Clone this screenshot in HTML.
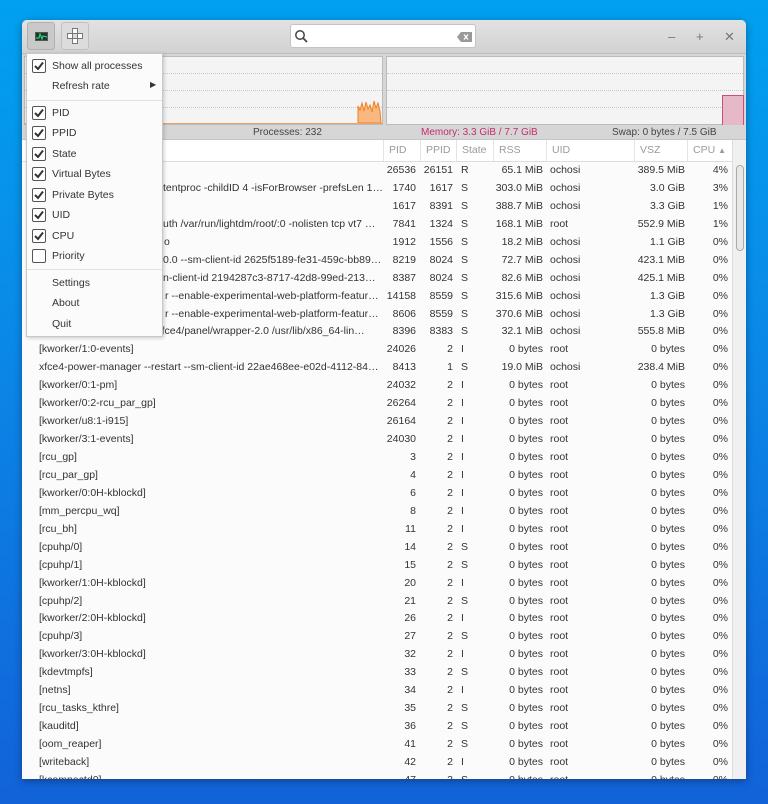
<!DOCTYPE html>
<html><head><meta charset="utf-8"><style>
*{margin:0;padding:0;box-sizing:border-box}
body{width:768px;height:804px;overflow:hidden;background:linear-gradient(180deg,#01a0f0 0%,#0a8ae8 40%,#1262d8 100%);font-family:"Liberation Sans",sans-serif;font-size:10.5px;color:#333;position:relative}
#win{position:absolute;left:22px;top:20px;width:724px;height:759px;background:#fbfbfb;border-radius:5px 5px 0 0;overflow:hidden;box-shadow:0 2px 8px rgba(0,0,0,.35)}
#tb{position:absolute;left:0;top:0;width:724px;height:34px;background:linear-gradient(#e2e2e2,#d2d2d2);border-bottom:1px solid #bdbdbd}
.btn{position:absolute;top:2px;width:28px;height:28px;border:1px solid #c0c0c0;border-radius:3px;background:#dcdcdc}
#search{position:absolute;left:268px;top:4px;width:186px;height:24px;background:#fff;border:1px solid #c4c4c4;border-radius:3px}
.wc{position:absolute;top:9px;color:#777;font-size:13px}
#graphs{position:absolute;left:0;top:34px;width:724px;height:73px;background:#d6d6d6}
.g{position:absolute;top:2px;height:69px;background:#f4f4f4;border:1px solid #bbb}
.dl{position:absolute;left:0;right:0;border-top:1px dotted #c8c8c8}
#status{position:absolute;left:0;top:107px;width:724px;height:13px;background:#d6d6d6;border-bottom:1px solid #c4c4c4;font-size:10px;color:#444}
#status span{position:absolute;top:0}
#hdr{position:absolute;left:0;top:120px;width:710px;height:22px;background:#fff;border-bottom:1px solid #ddd;color:#9a9a9a}
#hdr div{position:absolute;top:0;height:21px;line-height:21px;border-left:1px solid #e4e4e4;padding-left:5px}
#rows{position:absolute;left:0;top:142px;width:710px}
.r{position:relative;height:17.95px;line-height:17.95px;white-space:nowrap}
.r span{position:absolute;top:0}
.n{left:17px;width:344px;overflow:hidden;text-overflow:ellipsis}
.p{right:316px}.pp{right:279px}.s{left:439px}.rs{right:189px}.u{left:528px}.v{right:47px}.c{right:4px}
#sb{position:absolute;left:710px;top:120px;width:14px;height:639px;background:#f0f0f0;border-left:1px solid #ddd}
#thumb{position:absolute;left:3px;top:25px;width:8px;height:86px;border:1px solid #aaa;border-radius:4px;background:#e8e8e8}
#menu{position:absolute;left:26px;top:53px;width:137px;height:284px;background:#fbfbfb;border:1px solid #c8c8c8;box-shadow:1px 1px 4px rgba(0,0,0,.2);font-size:10.5px;color:#333}
#menu .i{position:absolute;left:25px}
.cb{position:absolute;left:5px;width:14px;height:14px;border:1.5px solid #555;border-radius:2px;background:#fff}
.cb svg{position:absolute;left:1px;top:1px}
.sep{position:absolute;left:0;right:0;border-top:1px solid #e2e2e2}
</style></head><body>
<div id="win">
 <div id="tb">
  <div class="btn" style="left:5px;background:#c9c9c9;border-color:#b0b0b0"><div style="position:absolute;left:7px;top:9px;width:13px;height:9px;background:#1c3a2c;border:1px solid #555"><svg width="11" height="7" style="position:absolute;left:0;top:0"><polyline points="0,5 3,5 4,1 6,6 7,3 11,4" fill="none" stroke="#3ee08a" stroke-width="1"/></svg></div></div>
  <div class="btn" style="left:39px"><svg width="26" height="26"><g fill="#fff" stroke="#777" stroke-width="1"><rect x="10.5" y="5.5" width="5" height="5"/><rect x="10.5" y="15.5" width="5" height="5"/><rect x="5.5" y="10.5" width="5" height="5"/><rect x="15.5" y="10.5" width="5" height="5"/></g></svg></div>
  <div id="search"><svg width="16" height="16" style="position:absolute;left:3px;top:4px"><circle cx="6" cy="6" r="4.2" fill="none" stroke="#444" stroke-width="1.5"/><line x1="9" y1="9" x2="13" y2="13" stroke="#444" stroke-width="1.8"/></svg><svg width="16" height="12" style="position:absolute;left:166px;top:6px"><path d="M4 1H15V11H4L0 6Z" fill="#999"/><path d="M7 3.5L11 8.5M11 3.5L7 8.5" stroke="#fff" stroke-width="1.3"/></svg></div>
  <span class="wc" style="left:646px">–</span><span class="wc" style="left:674px">+</span><span class="wc" style="left:702px">✕</span>
 </div>
 <div id="graphs">
  <div class="g" style="left:2px;width:359px"><div class="dl" style="top:16px"></div><div class="dl" style="top:33px"></div><div class="dl" style="top:50px"></div>
   <svg width="359" height="69" style="position:absolute;left:-1px;top:-1px"><path d="M334 67L334 50L336 54L338 47L340 55L342 46L344 53L346 49L348 56L350 45L352 52L354 47L356 55L357 67Z" fill="#f8b880" stroke="#f08020" stroke-width="1"/><line x1="0" y1="67.5" x2="359" y2="67.5" stroke="#f0a060"/></svg></div>
  <div class="g" style="left:364px;width:358px"><div class="dl" style="top:16px"></div><div class="dl" style="top:33px"></div><div class="dl" style="top:50px"></div>
   <div style="position:absolute;left:335px;top:38px;width:22px;height:30px;background:#e6b8c8;border:1px solid #c85080;border-bottom:none"></div></div>
 </div>
 <div id="status"><span style="left:231px">Processes: 232</span><span style="left:399px;color:#c42e6c">Memory: 3.3 GiB / 7.7 GiB</span><span style="left:590px">Swap: 0 bytes / 7.5 GiB</span></div>
 <div id="hdr"><div style="left:0;border:none"></div><div style="left:361px">PID</div><div style="left:398px">PPID</div><div style="left:434px">State</div><div style="left:471px">RSS</div><div style="left:524px">UID</div><div style="left:612px">VSZ</div><div style="left:665px">CPU <span style="font-size:8px">▲</span></div></div>
 <div id="rows">
<div class="r"><span class="n">xfce4-taskmanager</span><span class="p">26536</span><span class="pp">26151</span><span class="s">R</span><span class="rs">65.1 MiB</span><span class="u">ochosi</span><span class="v">389.5 MiB</span><span class="c">4%</span></div>
<div class="r"><span class="n" style="left:141px;width:220px">tentproc -childID 4 -isForBrowser -prefsLen 1…</span><span class="p">1740</span><span class="pp">1617</span><span class="s">S</span><span class="rs">303.0 MiB</span><span class="u">ochosi</span><span class="v">3.0 GiB</span><span class="c">3%</span></div>
<div class="r"><span class="n">firefox</span><span class="p">1617</span><span class="pp">8391</span><span class="s">S</span><span class="rs">388.7 MiB</span><span class="u">ochosi</span><span class="v">3.3 GiB</span><span class="c">1%</span></div>
<div class="r"><span class="n" style="left:141px;width:220px">uth /var/run/lightdm/root/:0 -nolisten tcp vt7 …</span><span class="p">7841</span><span class="pp">1324</span><span class="s">S</span><span class="rs">168.1 MiB</span><span class="u">root</span><span class="v">552.9 MiB</span><span class="c">1%</span></div>
<div class="r"><span class="n" style="left:142px;width:220px">o</span><span class="p">1912</span><span class="pp">1556</span><span class="s">S</span><span class="rs">18.2 MiB</span><span class="u">ochosi</span><span class="v">1.1 GiB</span><span class="c">0%</span></div>
<div class="r"><span class="n" style="left:141px;width:220px">0.0 --sm-client-id 2625f5189-fe31-459c-bb89…</span><span class="p">8219</span><span class="pp">8024</span><span class="s">S</span><span class="rs">72.7 MiB</span><span class="u">ochosi</span><span class="v">423.1 MiB</span><span class="c">0%</span></div>
<div class="r"><span class="n" style="left:141px;width:220px">n-client-id 2194287c3-8717-42d8-99ed-213…</span><span class="p">8387</span><span class="pp">8024</span><span class="s">S</span><span class="rs">82.6 MiB</span><span class="u">ochosi</span><span class="v">425.1 MiB</span><span class="c">0%</span></div>
<div class="r"><span class="n" style="left:143px;width:220px">r --enable-experimental-web-platform-featur…</span><span class="p">14158</span><span class="pp">8559</span><span class="s">S</span><span class="rs">315.6 MiB</span><span class="u">ochosi</span><span class="v">1.3 GiB</span><span class="c">0%</span></div>
<div class="r"><span class="n" style="left:143px;width:220px">r --enable-experimental-web-platform-featur…</span><span class="p">8606</span><span class="pp">8559</span><span class="s">S</span><span class="rs">370.6 MiB</span><span class="u">ochosi</span><span class="v">1.3 GiB</span><span class="c">0%</span></div>
<div class="r"><span class="n">/usr/lib/x86_64-linux-gnu/xfce4/panel/wrapper-2.0 /usr/lib/x86_64-lin…</span><span class="p">8396</span><span class="pp">8383</span><span class="s">S</span><span class="rs">32.1 MiB</span><span class="u">ochosi</span><span class="v">555.8 MiB</span><span class="c">0%</span></div>
<div class="r"><span class="n">[kworker/1:0-events]</span><span class="p">24026</span><span class="pp">2</span><span class="s">I</span><span class="rs">0 bytes</span><span class="u">root</span><span class="v">0 bytes</span><span class="c">0%</span></div>
<div class="r"><span class="n">xfce4-power-manager --restart --sm-client-id 22ae468ee-e02d-4112-84…</span><span class="p">8413</span><span class="pp">1</span><span class="s">S</span><span class="rs">19.0 MiB</span><span class="u">ochosi</span><span class="v">238.4 MiB</span><span class="c">0%</span></div>
<div class="r"><span class="n">[kworker/0:1-pm]</span><span class="p">24032</span><span class="pp">2</span><span class="s">I</span><span class="rs">0 bytes</span><span class="u">root</span><span class="v">0 bytes</span><span class="c">0%</span></div>
<div class="r"><span class="n">[kworker/0:2-rcu_par_gp]</span><span class="p">26264</span><span class="pp">2</span><span class="s">I</span><span class="rs">0 bytes</span><span class="u">root</span><span class="v">0 bytes</span><span class="c">0%</span></div>
<div class="r"><span class="n">[kworker/u8:1-i915]</span><span class="p">26164</span><span class="pp">2</span><span class="s">I</span><span class="rs">0 bytes</span><span class="u">root</span><span class="v">0 bytes</span><span class="c">0%</span></div>
<div class="r"><span class="n">[kworker/3:1-events]</span><span class="p">24030</span><span class="pp">2</span><span class="s">I</span><span class="rs">0 bytes</span><span class="u">root</span><span class="v">0 bytes</span><span class="c">0%</span></div>
<div class="r"><span class="n">[rcu_gp]</span><span class="p">3</span><span class="pp">2</span><span class="s">I</span><span class="rs">0 bytes</span><span class="u">root</span><span class="v">0 bytes</span><span class="c">0%</span></div>
<div class="r"><span class="n">[rcu_par_gp]</span><span class="p">4</span><span class="pp">2</span><span class="s">I</span><span class="rs">0 bytes</span><span class="u">root</span><span class="v">0 bytes</span><span class="c">0%</span></div>
<div class="r"><span class="n">[kworker/0:0H-kblockd]</span><span class="p">6</span><span class="pp">2</span><span class="s">I</span><span class="rs">0 bytes</span><span class="u">root</span><span class="v">0 bytes</span><span class="c">0%</span></div>
<div class="r"><span class="n">[mm_percpu_wq]</span><span class="p">8</span><span class="pp">2</span><span class="s">I</span><span class="rs">0 bytes</span><span class="u">root</span><span class="v">0 bytes</span><span class="c">0%</span></div>
<div class="r"><span class="n">[rcu_bh]</span><span class="p">11</span><span class="pp">2</span><span class="s">I</span><span class="rs">0 bytes</span><span class="u">root</span><span class="v">0 bytes</span><span class="c">0%</span></div>
<div class="r"><span class="n">[cpuhp/0]</span><span class="p">14</span><span class="pp">2</span><span class="s">S</span><span class="rs">0 bytes</span><span class="u">root</span><span class="v">0 bytes</span><span class="c">0%</span></div>
<div class="r"><span class="n">[cpuhp/1]</span><span class="p">15</span><span class="pp">2</span><span class="s">S</span><span class="rs">0 bytes</span><span class="u">root</span><span class="v">0 bytes</span><span class="c">0%</span></div>
<div class="r"><span class="n">[kworker/1:0H-kblockd]</span><span class="p">20</span><span class="pp">2</span><span class="s">I</span><span class="rs">0 bytes</span><span class="u">root</span><span class="v">0 bytes</span><span class="c">0%</span></div>
<div class="r"><span class="n">[cpuhp/2]</span><span class="p">21</span><span class="pp">2</span><span class="s">S</span><span class="rs">0 bytes</span><span class="u">root</span><span class="v">0 bytes</span><span class="c">0%</span></div>
<div class="r"><span class="n">[kworker/2:0H-kblockd]</span><span class="p">26</span><span class="pp">2</span><span class="s">I</span><span class="rs">0 bytes</span><span class="u">root</span><span class="v">0 bytes</span><span class="c">0%</span></div>
<div class="r"><span class="n">[cpuhp/3]</span><span class="p">27</span><span class="pp">2</span><span class="s">S</span><span class="rs">0 bytes</span><span class="u">root</span><span class="v">0 bytes</span><span class="c">0%</span></div>
<div class="r"><span class="n">[kworker/3:0H-kblockd]</span><span class="p">32</span><span class="pp">2</span><span class="s">I</span><span class="rs">0 bytes</span><span class="u">root</span><span class="v">0 bytes</span><span class="c">0%</span></div>
<div class="r"><span class="n">[kdevtmpfs]</span><span class="p">33</span><span class="pp">2</span><span class="s">S</span><span class="rs">0 bytes</span><span class="u">root</span><span class="v">0 bytes</span><span class="c">0%</span></div>
<div class="r"><span class="n">[netns]</span><span class="p">34</span><span class="pp">2</span><span class="s">I</span><span class="rs">0 bytes</span><span class="u">root</span><span class="v">0 bytes</span><span class="c">0%</span></div>
<div class="r"><span class="n">[rcu_tasks_kthre]</span><span class="p">35</span><span class="pp">2</span><span class="s">S</span><span class="rs">0 bytes</span><span class="u">root</span><span class="v">0 bytes</span><span class="c">0%</span></div>
<div class="r"><span class="n">[kauditd]</span><span class="p">36</span><span class="pp">2</span><span class="s">S</span><span class="rs">0 bytes</span><span class="u">root</span><span class="v">0 bytes</span><span class="c">0%</span></div>
<div class="r"><span class="n">[oom_reaper]</span><span class="p">41</span><span class="pp">2</span><span class="s">S</span><span class="rs">0 bytes</span><span class="u">root</span><span class="v">0 bytes</span><span class="c">0%</span></div>
<div class="r"><span class="n">[writeback]</span><span class="p">42</span><span class="pp">2</span><span class="s">I</span><span class="rs">0 bytes</span><span class="u">root</span><span class="v">0 bytes</span><span class="c">0%</span></div>
<div class="r"><span class="n">[kcompactd0]</span><span class="p">47</span><span class="pp">2</span><span class="s">S</span><span class="rs">0 bytes</span><span class="u">root</span><span class="v">0 bytes</span><span class="c">0%</span></div>
 </div>
 <div id="sb"><div id="thumb"></div></div>
</div>
<div id="menu">
 <div class="cb" style="top:5px"><svg width="10" height="10"><path d="M1 5L4 8L9 1.5" fill="none" stroke="#333" stroke-width="2"/></svg></div><span class="i" style="top:6px">Show all processes</span>
 <span class="i" style="top:26px">Refresh rate</span><span style="position:absolute;left:123px;top:26px;font-size:8px;color:#333">▶</span>
 <div class="sep" style="top:46px"></div>
 <div class="cb" style="top:52px"><svg width="10" height="10"><path d="M1 5L4 8L9 1.5" fill="none" stroke="#333" stroke-width="2"/></svg></div><span class="i" style="top:53px">PID</span>
 <div class="cb" style="top:72px"><svg width="10" height="10"><path d="M1 5L4 8L9 1.5" fill="none" stroke="#333" stroke-width="2"/></svg></div><span class="i" style="top:73px">PPID</span>
 <div class="cb" style="top:93px"><svg width="10" height="10"><path d="M1 5L4 8L9 1.5" fill="none" stroke="#333" stroke-width="2"/></svg></div><span class="i" style="top:94px">State</span>
 <div class="cb" style="top:113px"><svg width="10" height="10"><path d="M1 5L4 8L9 1.5" fill="none" stroke="#333" stroke-width="2"/></svg></div><span class="i" style="top:114px">Virtual Bytes</span>
 <div class="cb" style="top:134px"><svg width="10" height="10"><path d="M1 5L4 8L9 1.5" fill="none" stroke="#333" stroke-width="2"/></svg></div><span class="i" style="top:135px">Private Bytes</span>
 <div class="cb" style="top:154px"><svg width="10" height="10"><path d="M1 5L4 8L9 1.5" fill="none" stroke="#333" stroke-width="2"/></svg></div><span class="i" style="top:155px">UID</span>
 <div class="cb" style="top:175px"><svg width="10" height="10"><path d="M1 5L4 8L9 1.5" fill="none" stroke="#333" stroke-width="2"/></svg></div><span class="i" style="top:176px">CPU</span>
 <div class="cb" style="top:195px"></div><span class="i" style="top:196px">Priority</span>
 <div class="sep" style="top:215px"></div>
 <span class="i" style="top:223px">Settings</span>
 <span class="i" style="top:243px">About</span>
 <span class="i" style="top:264px">Quit</span>
</div>
</body></html>
